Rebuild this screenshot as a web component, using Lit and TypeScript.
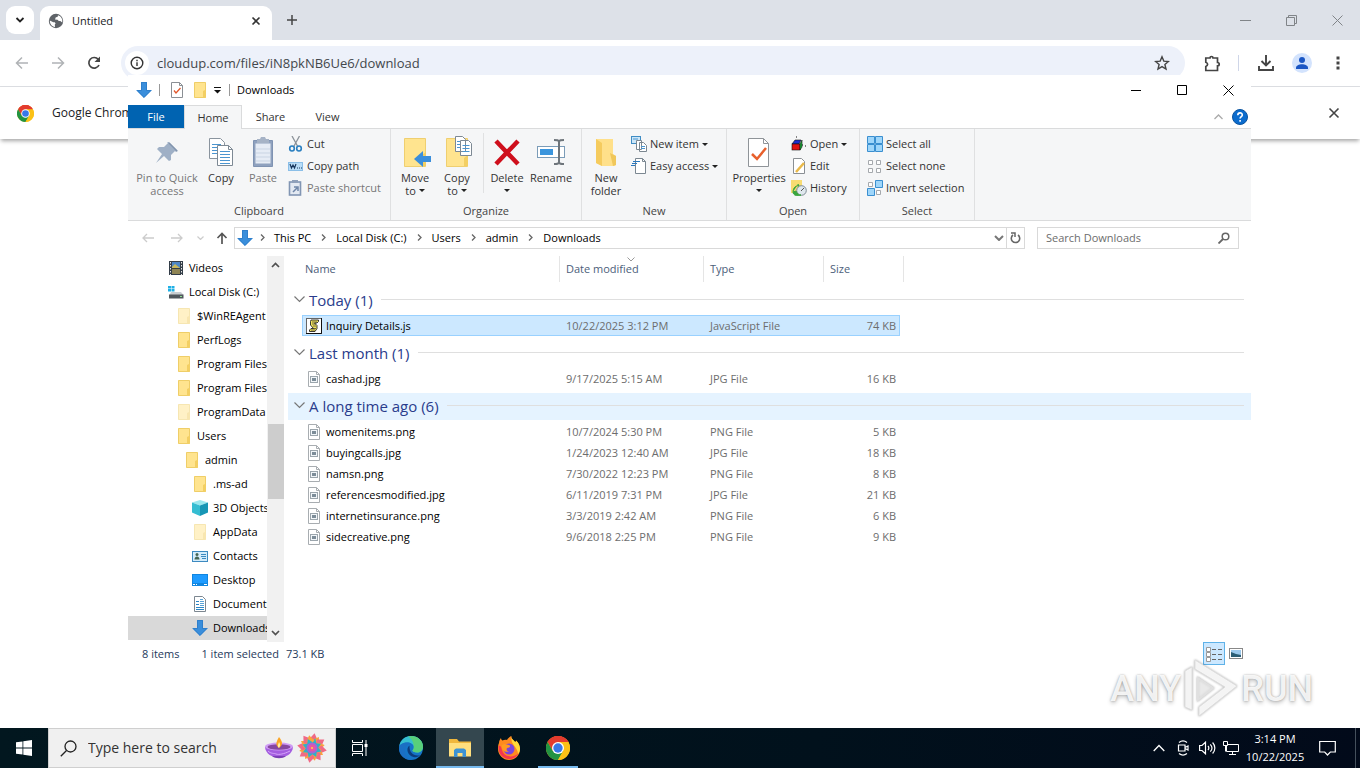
import { LitElement, html, css, nothing, TemplateResult } from "lit";
import { classMap } from "lit/directives/class-map.js";

const base = css`
  * { box-sizing: border-box; }
  button, input { font: inherit; color: inherit; border: 0; background: none; padding: 0; margin: 0; outline: 0; }
  button { display: inline-flex; align-items: center; justify-content: center; white-space: nowrap; }
  svg { display: block; flex: none; }
  ul, ol { list-style: none; margin: 0; padding: 0; }
`;

/* ---------- icons ---------- */

const downArrow = html`<svg width="16" height="16" viewBox="0 0 16 16"><path d="M5 0h6v8h5l-8 8-8-8h5z" fill="#3a8edb"/><path d="M5.500 .5h5v8h4.300L8 15.300 1.200 8.500h4.300z" fill="none" stroke="#2f7fcb"/></svg>`;
const folder = (pale = false) => html`<svg width="16" height="16" viewBox="0 0 16 16" opacity=${pale ? "0.5" : "1"}><path d="M2 .5h12V15.500H2z" fill="#ffe48f"/><path d="M2.500 .5h11V15.500h-11z" fill="none" stroke="#efce68"/><path d="M11 15.500V9l3-1.500v8z" fill="#f3cf63"/></svg>`;
const chromeLogo = (s: number) => html`<svg width=${s} height=${s} viewBox="0 0 24 24"><circle cx="12" cy="12" r="12" fill="#fbc116"/><path d="M12 12L1.600 6A12 12 0 0 1 22.400 6z" fill="#e33b2e"/><path d="M12 6h10.400A12 12 0 0 0 1.600 6l5.200 9z" fill="#e33b2e"/><path d="M6.800 15L1.600 6A12 12 0 0 0 12 24l5.200-9z" fill="#229342"/><path d="M17.200 15L12 24A12 12 0 0 0 22.400 6H12z" fill="#fbc116"/><circle cx="12" cy="12" r="6" fill="#fff"/><circle cx="12" cy="12" r="4.700" fill="#3878e8"/></svg>`;
const caret = html`<svg width="6" height="3" viewBox="0 0 6 3"><path d="M0 0h6L3 3z" fill="#222"/></svg>`;
const crumbChevron = html`<svg width="5" height="7" viewBox="0 0 5 7"><path d="M1 .5l3 3-3 3" fill="none" stroke="#666" stroke-width="1.300"/></svg>`;
const photoFile = html`<svg width="12" height="16" viewBox="0 0 12 16"><path d="M.5 .5h8l3 3v12H.5z" fill="#fff" stroke="#a8adb1"/><path d="M8.500 .5v3h3" fill="none" stroke="#a8adb1"/><rect x="2.500" y="5.500" width="7" height="6" fill="#f1f5f8" stroke="#9ba5ac"/><rect x="4" y="7" width="4" height="3" fill="#7c8c98"/></svg>`;
const scriptFile = html`<svg width="16" height="16" viewBox="0 0 16 16"><rect x=".5" y=".5" width="15" height="15" fill="#fff" stroke="#666"/><path d="M15.500 0v15.500H0" fill="none" stroke="#111"/><path d="M5 2h7.500v1.500L11 5H8.500l2.500 2.500v3L9 13.500H3.500V12L5 10.500h2.500L4.500 7V3.500z" fill="#f4e55a" stroke="#222" stroke-width=".9"/><path d="M6 4h5M6 6h4M7 8h3M6 10.500h4M5 12h4" stroke="#333" stroke-width=".7"/></svg>`;
const pageIcon = html`<svg width="12" height="16" viewBox="0 0 12 16"><path d="M.5 .5h8l3 3v12H.5z" fill="#fff" stroke="#8a8f94"/><path d="M8.500 .5v3h3" fill="none" stroke="#8a8f94"/><path d="M3 8.500l2 2.500 4.500-5" fill="none" stroke="#e2572b" stroke-width="1.300"/></svg>`;

const nav: Record<string, TemplateResult> = {
  videos: html`<svg width="16" height="16" viewBox="0 0 16 16"><rect x="1" y="1" width="14" height="14" fill="#333d48"/><rect x="4" y="2" width="8" height="6" fill="#4d86c5"/><rect x="4" y="9" width="8" height="5" fill="#8e8454"/><path d="M4 7l3-3 5 4H4z" fill="#c9b85a"/><path d="M2.500 2v13M13.500 2v13" stroke="#e8e8e8" stroke-dasharray="1.500 1.500"/></svg>`,
  disk: html`<svg width="16" height="16" viewBox="0 0 16 16"><path d="M0 2h3v2.500H0zM3.500 2h3v2.500h-3zM0 5h3v2.500H0zM3.500 5h3v2.500h-3z" fill="#1fb0e6"/><path d="M3 8h10l2.500 3h-14z" fill="#c9ced2"/><rect x="1" y="10.500" width="14.500" height="4" fill="#50575d"/><rect x="12" y="12" width="2" height="1" fill="#8fe08f"/></svg>`,
  objects: html`<svg width="16" height="16" viewBox="0 0 16 16"><path d="M8 0l8 2.500-8 3-8-3z" fill="#9be8ee"/><path d="M0 2.500l8 3V16l-8-3.500z" fill="#35bdd2"/><path d="M16 2.500l-8 3V16l8-3.500z" fill="#1796b5"/></svg>`,
  contacts: html`<svg width="16" height="16" viewBox="0 0 16 16"><rect x=".5" y="3.500" width="15" height="10" fill="#d4ecfb" stroke="#3c8ac0"/><circle cx="5" cy="6.500" r="1.500" fill="#465"/><path d="M2.500 11.500c0-4 5-4 5 0z" fill="#465"/><path d="M9 6.500h5M9 8.500h5M10 10.500h4" stroke="#3c8ac0"/></svg>`,
  desktop: html`<svg width="16" height="16" viewBox="0 0 16 16"><rect x="0" y="2" width="16" height="12" fill="#1186e0"/><path d="M1 3h14v8H1z" fill="#1e9bff"/><path d="M1 12.500h2m1 0h1m7 0h3" stroke="#fff"/></svg>`,
  document: html`<svg width="16" height="16" viewBox="0 0 16 16"><path d="M2.500 .5h8l3 3v12h-11z" fill="#fff" stroke="#7d8790"/><path d="M4 5.500h3M4 8.500h3M4 11.500h8M4 13.500h8" stroke="#2b86c6"/><path d="M8 3.500h3M8 5.500h4M8 7.500h4M8 9.500h4" stroke="#5aa3d6"/></svg>`,
  folder: folder(),
  pale: folder(true),
  down: downArrow,
};

const rib: Record<string, TemplateResult> = {
  pin: html`<svg width="32" height="32" viewBox="0 0 32 32"><path d="M18 6l9 9-2 1-1-1-4 4v5l-2 1-5-5-8 7 6-9-5-5 2-2h5l4-4-1-1z" fill="#9fb0c6"/><path d="M18 7l8 8" stroke="#8294ad" stroke-width="1.500"/></svg>`,
  copy: html`<svg width="32" height="32" viewBox="0 0 32 32"><path d="M4.500 2.500h11l4 4v16h-15z" fill="#fff" stroke="#8a949e"/><path d="M7 8.500h9M7 11.500h9M7 14.500h9M7 17.500h9" stroke="#4b95d0"/><path d="M12.500 9.500h11l4 4v16h-15z" fill="#fff" stroke="#7d8994"/><path d="M23.500 9.500v4h4" fill="none" stroke="#7d8994"/><path d="M15 15.500h10M15 18.500h10M15 21.500h10M15 24.500h10M15 27.500h10" stroke="#4b95d0"/></svg>`,
  paste: html`<svg width="32" height="32" viewBox="0 0 32 32"><path d="M6.500 4.500h19v26h-19z" fill="#8fa1be" stroke="#7f93b2"/><path d="M8.500 7.500h15v20h-15z" fill="#e6ecf5"/><path d="M9 13h14M9 17h14M9 21h14M9 25h14" stroke="#c9d4e3"/><path d="M10 3h3l1-2h4l1 2h3v4H10z" fill="#a6b3c6"/></svg>`,
  cut: html`<svg width="16" height="16" viewBox="0 0 16 16"><path d="M4 0l6 11M11.500 0l-6 11" stroke="#8b9299" stroke-width="1.300"/><ellipse cx="4" cy="12.500" rx="2.300" ry="2.500" fill="none" stroke="#2a7fc0" stroke-width="1.600"/><ellipse cx="11" cy="12.500" rx="2.300" ry="2.500" fill="none" stroke="#2a7fc0" stroke-width="1.600"/></svg>`,
  path: html`<svg width="16" height="16" viewBox="0 0 16 16"><rect x=".5" y="4.500" width="14" height="8" fill="#b8dcf7" stroke="#8bbfe8"/><path d="M2 6l1.500 4L5 7l1.500 3L8 6M9 10h1m1 0h1m1 0h1" fill="none" stroke="#17365d" stroke-width="1.200"/></svg>`,
  pasteShort: html`<svg width="16" height="16" viewBox="0 0 16 16"><rect x="1.500" y="2" width="11" height="13" fill="#e3e9f2" stroke="#8195b3" stroke-width="1.600"/><path d="M4 0h6v3H4z" fill="#8fa0ba"/><path d="M5 12l4-4M6 7h4v4" fill="none" stroke="#6e85a8" stroke-width="1.500"/></svg>`,
  move: html`<svg width="32" height="32" viewBox="0 0 32 32"><path d="M5.500 2.500h21v28h-21z" fill="#ffe48f" stroke="#efcf70"/><path d="M23 30V19l4-3v14z" fill="#f3cf63"/><path d="M32 20v6h-8v5l-9-8 9-8v5z" fill="#3a8edb"/></svg>`,
  copyTo: html`<svg width="32" height="32" viewBox="0 0 32 32"><path d="M5.500 2.500h21v28h-21z" fill="#ffe48f" stroke="#efcf70"/><path d="M23 30V22l4-3v11z" fill="#f3cf63"/><path d="M14.500 .5h7l3 3v12h-10zM19.500 4.500h8l3 3v12h-11z" fill="#fff" stroke="#7d8994"/><path d="M16 5.500h3M16 8.500h3M16 11.500h3M21.500 9.500h7M21.500 12.500h7M21.500 15.500h7" stroke="#4b95d0"/></svg>`,
  del: html`<svg width="32" height="32" viewBox="0 0 32 32"><path d="M5 5l22 23M27 5L5 28" stroke="#cf0f1c" stroke-width="4.500"/></svg>`,
  rename: html`<svg width="32" height="32" viewBox="0 0 32 32"><rect x="2.500" y="10.500" width="27" height="11" fill="#fff" stroke="#7b9cb8"/><rect x="5" y="13" width="13" height="6" fill="#3a95dd"/><path d="M19 4c3 0 5 0 5 2 0-2 2-2 5-2M24 6v20M19 28c3 0 5 0 5-2 0 2 2 2 5 2" fill="none" stroke="#6e757b" stroke-width="2"/></svg>`,
  newFolder: html`<svg width="32" height="32" viewBox="0 0 32 32"><path d="M6 3h17v15l3 2v9l-2 1H12l-6-3z" fill="#ffe08a"/><path d="M6 3l6 4v23l-6-3z" fill="#f5cb5e"/><path d="M20 17l6 3v9l-3 1z" fill="#f0c75b"/></svg>`,
  newItem: html`<svg width="16" height="16" viewBox="0 0 16 16"><rect x=".5" y=".5" width="9" height="7" fill="#cbe6f8" stroke="#3f8cc4"/><path d="M5.500 4.500h5v9h-5zM8.500 6.500h4l3 3v6h-7z" fill="#fff" stroke="#7b8791"/><path d="M10 10.500h4M10 12.500h4M2 3h5" stroke="#4b95d0"/></svg>`,
  easy: html`<svg width="16" height="16" viewBox="0 0 16 16"><path d="M4.500 .5h7l3 3v12h-10z" fill="#fff" stroke="#7b8791"/><path d="M11.500 .5v3h3" fill="none" stroke="#7b8791"/><path d="M2 3.500h7M1 5.500h5M0 7.500h4" stroke="#2a78bd"/></svg>`,
  props: html`<svg width="32" height="32" viewBox="0 0 32 32"><path d="M5.500 2.500h15l5 5v23h-20z" fill="#fff" stroke="#8f9499"/><path d="M20.500 2.500v5h5" fill="none" stroke="#8f9499"/><path d="M9 18l5 5 9-11" fill="none" stroke="#e8602c" stroke-width="2.500"/></svg>`,
  open: html`<svg width="16" height="16" viewBox="0 0 16 16"><path d="M1 8l3-4h6l-2 4z" fill="#1b2ed0" stroke="#111" stroke-width=".6"/><rect x="1" y="8" width="8" height="6" fill="#e01212" stroke="#111" stroke-width=".6"/><path d="M9 8l2-4v7l-2 3z" fill="#19b53a" stroke="#111" stroke-width=".6"/><path d="M5 1h1M11 9h1M14 10h1" stroke="#111"/></svg>`,
  edit: html`<svg width="16" height="16" viewBox="0 0 16 16"><path d="M2.500 .5h8l3 3v12h-11z" fill="#fff" stroke="#8a8f94"/><path d="M13 5l-8 9" stroke="#e9b949" stroke-width="2.500"/></svg>`,
  history: html`<svg width="16" height="16" viewBox="0 0 16 16"><rect x="0" y="0" width="11" height="13" fill="#f8dc72"/><circle cx="10.500" cy="10.500" r="4.800" fill="#dfe8ee" stroke="#7d8a94"/><path d="M10 11l3-3" stroke="#555"/><path d="M2 12c0-4 3-7 6-6l-1-2M2 12l3-1c1 3 3 4 5 4-4 2-8 0-8-3z" fill="#3aa63f" stroke="#3aa63f"/></svg>`,
  selAll: html`<svg width="16" height="16" viewBox="0 0 16 16"><path d="M.5 .5h7v7h-7zM8.500 .5h7v7h-7zM.5 8.500h7v7h-7zM8.500 8.500h7v7h-7z" fill="#9fd6fa" stroke="#3a8fd0"/></svg>`,
  selNone: html`<svg width="16" height="16" viewBox="0 0 16 16"><path d="M1.500 2.500h4v4h-4zM9.500 2.500h4v4h-4zM1.500 10.500h4v4h-4zM9.500 10.500h4v4h-4z" fill="#fff" stroke="#a5a9ad"/></svg>`,
  selInv: html`<svg width="16" height="16" viewBox="0 0 16 16"><path d="M1.500 2.500h4v4h-4zM9.500 10.500h4v4h-4z" fill="#fff" stroke="#a5a9ad"/><path d="M8.500 .5h7v7h-7zM.5 8.500h7v7h-7z" fill="#9fd6fa" stroke="#3a8fd0"/></svg>`,
};

/* ---------- browser ---------- */

class BrowserWindow extends LitElement {
  static styles = [base, css`
    :host { display: block; height: 100%; background: #fff; color: #202124; font: 11px/16px "Open Sans", "Noto Sans", sans-serif; }
    .tabs { display: flex; align-items: center; height: 40px; background: #dde1e8; padding-left: 6px; }
    .search { width: 28px; height: 28px; border-radius: 9px; background: #fff; }
    .tab { display: flex; align-items: center; gap: 8px; align-self: flex-end; height: 34px; width: 232px; margin-left: 6px; padding: 0 9px 4px 8px; border-radius: 9px 9px 0 0; background: #fff; }
    .tab span { flex: 1; }
    .new { width: 40px; height: 28px; }
    .sys { display: flex; margin-left: auto; }
    .sys button { width: 46px; height: 28px; }
    .bar { display: flex; align-items: center; height: 47px; border-bottom: 1px solid #dcdee2; padding: 0 4px; }
    .navs { display: flex; }
    .navs button { width: 36px; height: 34px; }
    .omni { display: flex; align-items: center; flex: 1; height: 34px; margin-left: 9px; border-radius: 17px; background: #edf1fa; padding: 0 15px 0 4px; gap: 8px; }
    .info { width: 24px; height: 24px; border-radius: 50%; background: #fff; }
    .omni input { flex: 1; font-size: 13px; color: #43474c; }
    .tools { display: flex; align-items: center; }
    .tools button { width: 36px; height: 34px; }
    .tools i { width: 1px; height: 16px; background: #cfd6e8; margin: 0 9px 0 8px; }
    .tools .ext { margin-left: 9px; }
    .note { display: flex; align-items: center; gap: 18px; height: 52px; padding: 0 17px; font-size: 12px; box-shadow: 0 3px 4px -1px rgba(0, 0, 0, .35); }
    .note button { margin-left: auto; width: 18px; height: 18px; }
  `];
  render() {
    return html`
      <header>
        <div class="tabs">
          <button class="search" aria-label="Search tabs"><svg width="10" height="6" viewBox="0 0 10 6"><path d="M1.500 1L5 4.500 8.500 1" fill="none" stroke="#222" stroke-width="1.800"/></svg></button>
          <div class="tab">
            <svg width="16" height="16" viewBox="0 0 16 16"><circle cx="8" cy="8" r="7.200" fill="#5f6368"/><path d="M1.800 7.500l3.500 1.700 1.500 0 .8 1.300-.8 1 .2 2.600C4 13.600 1.800 11 1.800 7.500zM10 2.200L9.500 4 7.800 4.300 7 6.500l2.500.3 1.300 1.200h1.500l1.900 1.500C15 6 13 3 10 2.200z" fill="#fff"/></svg>
            <span>Untitled</span>
            <button aria-label="Close tab"><svg width="14" height="14" viewBox="0 0 14 14"><path d="M3.500 3.500l7 7M10.500 3.500l-7 7" stroke="#333" stroke-width="1.600"/></svg></button>
          </div>
          <button class="new" aria-label="New tab"><svg width="12" height="12" viewBox="0 0 12 12"><path d="M6 1v10M1 6h10" stroke="#444" stroke-width="1.500"/></svg></button>
          <div class="sys">
            <button aria-label="Minimize"><svg width="11" height="11" viewBox="0 0 11 11"><path d="M0 5.500h11" stroke="#808488"/></svg></button>
            <button aria-label="Restore"><svg width="11" height="11" viewBox="0 0 11 11"><path d="M.5 2.500h8v8h-8zM2.500 2V.5h8v8H9" fill="none" stroke="#808488"/></svg></button>
            <button aria-label="Close"><svg width="11" height="11" viewBox="0 0 11 11"><path d="M.5 .5l10 10M10.500 .5l-10 10" stroke="#808488"/></svg></button>
          </div>
        </div>
        <div class="bar">
          <div class="navs">
            <button aria-label="Back"><svg width="14" height="14" viewBox="0 0 14 14"><path d="M13 7H2M7 1.500L1.500 7 7 12.500" fill="none" stroke="#b0b3b6" stroke-width="1.500"/></svg></button>
            <button aria-label="Forward"><svg width="14" height="14" viewBox="0 0 14 14"><path d="M1 7h11M7 1.500L12.500 7 7 12.500" fill="none" stroke="#b0b3b6" stroke-width="1.500"/></svg></button>
            <button aria-label="Reload"><svg width="14" height="14" viewBox="0 0 14 14"><path d="M12 9A5.300 5.300 0 1 1 11.300 3.500" fill="none" stroke="#444" stroke-width="1.700"/><path d="M13 .5V6H7.500z" fill="#444"/></svg></button>
          </div>
          <div class="omni">
            <button class="info" aria-label="View site information"><svg width="14" height="14" viewBox="0 0 14 14"><circle cx="7" cy="7" r="5.800" fill="none" stroke="#333" stroke-width="1.400"/><path d="M7 6.200V10M7 3.800v1.400" stroke="#333" stroke-width="1.400"/></svg></button>
            <input type="text" aria-label="Address and search bar" value="cloudup.com/files/iN8pkNB6Ue6/download">
            <button aria-label="Bookmark this tab"><svg width="16" height="16" viewBox="0 0 16 16"><path d="M8 1.800l1.800 4.300 4.600.4-3.500 3 1.100 4.500L8 11.600 4 14l1.100-4.500-3.500-3 4.600-.4z" fill="none" stroke="#444" stroke-width="1.400"/></svg></button>
          </div>
          <div class="tools">
            <button class="ext" aria-label="Extensions"><svg width="17" height="17" viewBox="0 0 17 17"><path d="M1.800 3h4.200c0-2 3-2 3 0h4.500v4.500c2.300 0 2.300 3.300 0 3.300v4.700H1.800V11.500c2.400-.8 2.400-3.500 0-4.300z" fill="none" stroke="#444" stroke-width="1.700"/></svg></button>
            <i></i>
            <button aria-label="Downloads"><svg width="18" height="18" viewBox="0 0 18 18"><path d="M9 1v10M4.500 7L9 11.500 13.500 7M2 12v4h14v-4" fill="none" stroke="#444" stroke-width="1.900"/></svg></button>
            <button aria-label="Profile"><svg width="20" height="20" viewBox="0 0 20 20"><circle cx="10" cy="10" r="10" fill="#d3e3fd"/><circle cx="10" cy="7" r="3" fill="#1a56c4"/><path d="M4 15c0-5 12-5 12 0v1H4z" fill="#1a56c4"/></svg></button>
            <button aria-label="Menu"><svg width="4" height="16" viewBox="0 0 4 16"><path d="M.5 1.500h3v3h-3zM.5 6.500h3v3h-3zM.5 11.500h3v3h-3z" fill="#444"/></svg></button>
          </div>
        </div>
        <div class="note">
          ${chromeLogo(17)}<span>Google Chrome</span>
          <button aria-label="Dismiss"><svg width="12" height="12" viewBox="0 0 12 12"><path d="M1.500 1.500l9 9M10.500 1.500l-9 9" stroke="#444" stroke-width="1.600"/></svg></button>
        </div>
      </header>`;
  }
}
customElements.define("browser-window", BrowserWindow);

/* ---------- file explorer ---------- */

type NavItem = [string, string, number];
const tree: NavItem[] = [
  ["videos", "Videos", 0], ["disk", "Local Disk (C:)", 0], ["pale", "$WinREAgent", 1], ["folder", "PerfLogs", 1],
  ["folder", "Program Files", 1], ["folder", "Program Files (x86)", 1], ["pale", "ProgramData", 1], ["folder", "Users", 1],
  ["folder", "admin", 2], ["folder", ".ms-ad", 3], ["objects", "3D Objects", 3], ["pale", "AppData", 3],
  ["contacts", "Contacts", 3], ["desktop", "Desktop", 3], ["document", "Documents", 3], ["down", "Downloads", 3],
];

const groups = [
  { label: "Today (1)", files: [["Inquiry Details.js", "10/22/2025 3:12 PM", "JavaScript File", "74 KB"]] },
  { label: "Last month (1)", files: [["cashad.jpg", "9/17/2025 5:15 AM", "JPG File", "16 KB"]] },
  { label: "A long time ago (6)", hot: true, files: [
    ["womenitems.png", "10/7/2024 5:30 PM", "PNG File", "5 KB"],
    ["buyingcalls.jpg", "1/24/2023 12:40 AM", "JPG File", "18 KB"],
    ["namsn.png", "7/30/2022 12:23 PM", "PNG File", "8 KB"],
    ["referencesmodified.jpg", "6/11/2019 7:31 PM", "JPG File", "21 KB"],
    ["internetinsurance.png", "3/3/2019 2:42 AM", "PNG File", "6 KB"],
    ["sidecreative.png", "9/6/2018 2:25 PM", "PNG File", "9 KB"],
  ] },
];

class FileExplorer extends LitElement {
  static styles = [base, css`
    :host { display: flex; flex-direction: column; background: #fff; color: #000; font: 11px/16px "Open Sans", "Noto Sans", sans-serif; }
    .title { display: flex; align-items: center; height: 30px; padding-left: 8px; }
    .quick { display: flex; align-items: center; }
    .quick i { width: 1px; height: 12px; background: #999; }
    .q1 { margin: 0 5px 0 7px; }
    .q2 { margin: 0 7px 0 6px; }
    .quick button { width: 23px; height: 22px; }
    .quick .drop { width: 12px; }
    .title span { flex: 1; }
    .title .win { width: 46px; height: 30px; }
    .tabs { display: flex; height: 24px; border-bottom: 1px solid #dadbdc; color: #333; }
    .tabs button { width: 57px; height: 24px; }
    .tabs .file { background: #0063b1; color: #fff; height: 23px; width: 56px; }
    .tabs .on { background: #f5f6f7; border: 1px solid #dadbdc; border-bottom: 0; width: 58px; }
    .tabs .help { width: 22px; }
    .tabs .up { width: 22px; margin-left: auto; }
    .ribbon { display: flex; height: 92px; background: #f5f6f7; border-bottom: 1px solid #dadbdc; color: #333; }
    .group { display: flex; flex-direction: column; padding-top: 4px; border-right: 1px solid #dfe0e1; }
    .acts { display: flex; height: 70px; padding-left: 3px; }
    .group h2 { margin: 0; font: inherit; text-align: center; color: #444; line-height: 16px; }
    .big { flex-direction: column; justify-content: flex-start; padding-top: 3px; gap: 3px; line-height: 13px; width: 42px; height: 68px; }
    .big .line { display: flex; align-items: center; justify-content: center; gap: 3px; min-height: 13px; }
    .w66 { width: 66px; } .w58 { width: 58px; } .w48 { width: 46px; }
    .off { color: #777; }
    .small { display: flex; flex-direction: column; align-items: flex-start; padding-left: 3px; }
    .small button { height: 22px; gap: 3px; }
    .sep { width: 1px; height: 60px; background: #e0e1e2; margin: 0 2px 0 5px; }
    .g1 { width: 263px; } .g2 { width: 191px; } .g3 { width: 145px; } .g4 { width: 133px; } .g5 { width: 115px; }
    .g1 .acts { padding-left: 6px; }
    .g1 .small, .g3 .small, .g5 .small { padding-left: 4px; }
    .addr { display: flex; align-items: center; height: 35px; padding: 0 12px 2px 5px; }
    .addr .arrow { width: 29px; height: 22px; }
    .addr .tiny { width: 18px; height: 22px; }
    .addr .upb { width: 25px; height: 22px; }
    .path { display: flex; align-items: center; flex: 1; height: 22px; border: 1px solid #d9d9d9; padding-left: 2px; }
    .path ol { display: flex; align-items: center; flex: 1; }
    .path li { display: flex; align-items: center; }
    .path li > svg { margin: 0 10px; }
    .path li:first-child > svg { margin: 0 9px 0 7px; }
    .path button { height: 20px; }
    .path .hist { width: 15px; }
    .path .ref { width: 18px; border-left: 1px solid #d9d9d9; }
    .find { display: flex; align-items: center; width: 202px; height: 22px; border: 1px solid #d9d9d9; margin-left: 12px; padding: 0 8px; }
    .find input { flex: 1; min-width: 0; }
    input::placeholder { color: #6d6d6d; opacity: 1; }
    .body { display: flex; flex: 1; }
    .tree { width: 139px; overflow: hidden; }
    .tree li { display: flex; align-items: center; gap: 5px; height: 24px; white-space: nowrap; padding-left: 40px; }
    .tree .d1 { padding-left: 48px; } .tree .d2 { padding-left: 56px; } .tree .d3 { padding-left: 64px; }
    .tree .cur { background: #d9d9d9; }
    .scroll { display: flex; flex-direction: column; align-items: center; width: 17px; background: #f1f1f1; }
    .scroll button { width: 17px; height: 18px; }
    .lane { flex: 1; width: 100%; padding-top: 150px; padding-left: 1px; }
    .thumb { height: 75px; background: #cdcdcd; }
    table, thead, tbody { display: block; }
    table { flex: 1; padding-left: 4px; color: #6d6d6d; }
    thead { padding-bottom: 5px; }
    .cols { display: grid; grid-template-columns: 257px 144px 120px 77px; width: 598px; margin-left: 14px; align-items: center; height: 21px; }
    .cols td { padding: 0; display: flex; align-items: center; gap: 4px; padding-left: 7px; height: 100%; }
    .cols td:first-child { color: #000; padding-left: 4px; }
    .cols td:last-child { justify-content: flex-end; padding-right: 4px; }
    .head { height: 26px; width: 602px; grid-template-columns: 258px 144px 120px 80px; }
    .head th { position: relative; font-weight: 400; text-align: left; color: #4c607a; padding: 0 0 0 6px; border-right: 1px solid #e5e5e5; line-height: 26px; }
    .head th:first-child { padding-left: 3px; }
    .head svg { position: absolute; top: 1px; left: 67px; }
    tbody { padding-bottom: 4px; }
    .grp { display: block; margin-bottom: 1px; }
    .grp th { display: flex; align-items: center; gap: 4px; height: 27px; padding: 0 7px 2px 6px; font-size: 15px; line-height: 20px; font-weight: 400; color: #2a3c8c; }
    .grp th::after { content: ""; flex: 1; height: 1px; background: #dfdfdf; margin-left: 4px; }
    .hot th { background: #e5f3ff; }
    .cell { width: 16px; display: flex; justify-content: center; }
    .sel { background: #cce8ff; outline: 1px solid #99d1ff; outline-offset: -1px; }
    .status { display: flex; align-items: center; height: 27px; padding: 0 8px 4px 14px; color: #1e395b; }
    .status .picked { margin: 0 7px 0 22px; }
    .views { display: flex; gap: 4px; margin-left: auto; }
    .views button { height: 23px; }
    .views .det { width: 22px; background: #cce8ff; border: 1px solid #5fb2e8; }
  `];

  big(icon: string, lines: string[], opt: { cls?: string; caret?: boolean; off?: boolean } = {}) {
    const last = lines.length - 1;
    return html`<button class="big ${opt.cls ?? ""} ${opt.off ? "off" : ""}" ?disabled=${opt.off}>
      ${rib[icon]}
      <span>${lines.map((l, i) => html`<span class="line">${l}${opt.caret && i === last ? caret : nothing}</span>`)}</span>
    </button>`;
  }
  small(icon: string, text: string, withCaret = false, off = false) {
    return html`<button class=${classMap({ off })} ?disabled=${off}>${rib[icon]}<span>${text}</span>${withCaret ? caret : nothing}</button>`;
  }

  render() {
    return html`
      <div class="title">
        <div class="quick">
          ${downArrow}<i class="q1"></i>
          <button aria-label="Properties">${pageIcon}</button>
          <button aria-label="New folder">${folder()}</button>
          <button class="drop" aria-label="Customize toolbar"><svg width="7" height="7" viewBox="0 0 7 7"><path d="M0 .5h7" stroke="#111"/><path d="M0 3h7L3.500 6.500z" fill="#111"/></svg></button>
          <i class="q2"></i>
        </div>
        <span>Downloads</span>
        <button class="win" aria-label="Minimize"><svg width="10" height="10" viewBox="0 0 10 10"><path d="M0 5.500h10" stroke="#000"/></svg></button>
        <button class="win" aria-label="Maximize"><svg width="10" height="10" viewBox="0 0 10 10"><path d="M.5 .5h9v9h-9z" fill="none" stroke="#000"/></svg></button>
        <button class="win" aria-label="Close"><svg width="11" height="11" viewBox="0 0 11 11"><path d="M.5 .5l10 10M10.500 .5l-10 10" stroke="#000"/></svg></button>
      </div>
      <nav class="tabs">
        <button class="file">File</button><button class="on">Home</button><button>Share</button><button>View</button>
        <button class="up" aria-label="Collapse ribbon"><svg width="9" height="6" viewBox="0 0 9 6"><path d="M.5 5l4-4 4 4" fill="none" stroke="#aaa" stroke-width="1.300"/></svg></button>
        <button class="help" aria-label="Help"><svg width="16" height="16" viewBox="0 0 16 16"><circle cx="8" cy="8" r="7.500" fill="#0b6cce" stroke="#0a539e"/><path d="M5.800 6.200c0-3 4.500-3 4.500-.3 0 1.700-2.200 1.700-2.200 3.600M8.100 11v1.700" fill="none" stroke="#fff" stroke-width="1.600"/></svg></button>
      </nav>
      <div class="ribbon">
        <section class="group g1">
          <div class="acts">
            ${this.big("pin", ["Pin to Quick", "access"], { cls: "w66", off: true })}
            ${this.big("copy", ["Copy"])}
            ${this.big("paste", ["Paste"], { off: true })}
            <div class="small">${this.small("cut", "Cut")}${this.small("path", "Copy path")}${this.small("pasteShort", "Paste shortcut", false, true)}</div>
          </div>
          <h2>Clipboard</h2>
        </section>
        <section class="group g2">
          <div class="acts">
            ${this.big("move", ["Move", "to"], { caret: true })}
            ${this.big("copyTo", ["Copy", "to"], { caret: true })}
            <div class="sep"></div>
            ${this.big("del", ["Delete", ""], { caret: true })}
            ${this.big("rename", ["Rename"], { cls: "w48" })}
          </div>
          <h2>Organize</h2>
        </section>
        <section class="group g3">
          <div class="acts">
            ${this.big("newFolder", ["New", "folder"])}
            <div class="small">${this.small("newItem", "New item", true)}${this.small("easy", "Easy access", true)}</div>
          </div>
          <h2>New</h2>
        </section>
        <section class="group g4">
          <div class="acts">
            ${this.big("props", ["Properties", ""], { cls: "w58", caret: true })}
            <div class="small">${this.small("open", "Open", true)}${this.small("edit", "Edit")}${this.small("history", "History")}</div>
          </div>
          <h2>Open</h2>
        </section>
        <section class="group g5">
          <div class="acts">
            <div class="small">${this.small("selAll", "Select all")}${this.small("selNone", "Select none")}${this.small("selInv", "Invert selection")}</div>
          </div>
          <h2>Select</h2>
        </section>
      </div>
      <div class="addr">
        <button class="arrow" aria-label="Back"><svg width="12" height="10" viewBox="0 0 12 10"><path d="M12 5H1M5 1L1 5l4 4" fill="none" stroke="#ccc" stroke-width="1.300"/></svg></button>
        <button class="arrow" aria-label="Forward"><svg width="12" height="10" viewBox="0 0 12 10"><path d="M0 5h11M7 1l4 4-4 4" fill="none" stroke="#ccc" stroke-width="1.300"/></svg></button>
        <button class="tiny" aria-label="Recent locations"><svg width="7" height="4" viewBox="0 0 7 4"><path d="M.5 .5l3 3 3-3" fill="none" stroke="#ccc" stroke-width="1.200"/></svg></button>
        <button class="upb" aria-label="Up"><svg width="12" height="12" viewBox="0 0 12 12"><path d="M6 12V1.500M1.500 6L6 1.500 10.500 6" fill="none" stroke="#555" stroke-width="1.700"/></svg></button>
        <div class="path">
          ${downArrow}
          <ol>${["This PC", "Local Disk (C:)", "Users", "admin", "Downloads"].map((c) => html`<li>${crumbChevron}<button>${c}</button></li>`)}</ol>
          <button class="hist" aria-label="Previous locations"><svg width="10" height="6" viewBox="0 0 10 6"><path d="M1 1l4 4 4-4" fill="none" stroke="#777" stroke-width="2"/></svg></button>
          <button class="ref" aria-label="Refresh"><svg width="11" height="12" viewBox="0 0 11 12"><path d="M8 3a4.200 4.200 0 1 1-5 0" fill="none" stroke="#666" stroke-width="1.600"/><path d="M1 1h4v4" fill="none" stroke="#666" stroke-width="1.500"/></svg></button>
        </div>
        <label class="find">
          <input type="text" aria-label="Search Downloads" placeholder="Search Downloads">
          <svg width="12" height="12" viewBox="0 0 12 12"><circle cx="7.500" cy="4.500" r="3.300" fill="none" stroke="#666" stroke-width="1.500"/><path d="M5 7l-4.500 4.500" stroke="#666" stroke-width="1.800"/></svg>
        </label>
      </div>
      <div class="body">
        <ul class="tree">
          ${tree.map(([icon, text, depth]) => html`<li class=${classMap({ ["d" + depth]: true, cur: icon === "down" })}>${nav[icon]}<span>${text}</span></li>`)}
        </ul>
        <div class="scroll">
          <button aria-label="Scroll up"><svg width="9" height="6" viewBox="0 0 9 6"><path d="M1 5l3.500-3.500L8 5" fill="none" stroke="#505050" stroke-width="1.700"/></svg></button>
          <div class="lane"><div class="thumb"></div></div>
          <button aria-label="Scroll down"><svg width="9" height="6" viewBox="0 0 9 6"><path d="M1 1l3.500 3.500L8 1" fill="none" stroke="#505050" stroke-width="1.700"/></svg></button>
        </div>
        <table>
          <thead>
            <tr class="cols head"><th>Name</th><th>Date modified<svg width="8" height="5" viewBox="0 0 8 5"><path d="M.5 .5L4 4 7.500 .5" fill="none" stroke="#999"/></svg></th><th>Type</th><th>Size</th></tr>
          </thead>
          ${groups.map((g, gi) => html`<tbody>
            <tr class=${classMap({ grp: true, hot: !!g.hot })}><th colspan="4"><svg width="11" height="7" viewBox="0 0 11 7"><path d="M.5 .5l5 5 5-5" fill="none" stroke="#777" stroke-width="1.200"/></svg><span>${g.label}</span></th></tr>
            ${g.files.map((f) => html`<tr class=${classMap({ cols: true, sel: gi === 0 })}>
              <td><span class="cell">${gi === 0 ? scriptFile : photoFile}</span>${f[0]}</td><td>${f[1]}</td><td>${f[2]}</td><td>${f[3]}</td>
            </tr>`)}
          </tbody>`)}
        </table>
      </div>
      <footer class="status">
        <span>8 items</span><span class="picked">1 item selected</span><span>73.1 KB</span>
        <div class="views">
          <button class="det" aria-label="Details view"><svg width="16" height="16" viewBox="0 0 16 16"><path d="M.5 1.500h4v4h-4zM.5 6.500h4v4h-4zM.5 11.500h4v4h-4z" fill="#fff" stroke="#999"/><path d="M6 3.500h10M6 8.500h10M6 13.500h10" stroke="#666" stroke-dasharray="4 2"/></svg></button>
          <button aria-label="Large icons view"><svg width="14" height="11" viewBox="0 0 14 11"><rect x=".5" y=".5" width="13" height="10" fill="#fff" stroke="#888"/><rect x="2" y="2" width="10" height="7" fill="#9cc9ec"/><path d="M2 4l5 2 5 1v2H2z" fill="#2b5d74"/></svg></button>
        </div>
      </footer>`;
  }
}
customElements.define("file-explorer", FileExplorer);

/* ---------- taskbar ---------- */

class TaskBar extends LitElement {
  static styles = [base, css`
    :host { display: flex; height: 40px; background: linear-gradient(90deg, #02171f, #01111c 60%, #020a1a); color: #fff; font: 11px/18px "Open Sans", "Noto Sans", sans-serif; }
    button { height: 40px; width: 48px; }
    .find { display: flex; align-items: center; width: 288px; background: #f0f0f0; border: 1px solid #cfcfcf; padding: 0 8px 0 11px; gap: 11px; }
    .find input { flex: 1; min-width: 0; font-size: 14px; }
    .find input::placeholder { color: #333; opacity: 1; }
    .art { display: flex; align-items: center; gap: 4px; }
    .task { width: 51px; padding-right: 4px; }
    .apps { display: flex; gap: 1px; }
    .on { background: #34474f; }
    .run { position: relative; }
    .run::after { content: ""; position: absolute; left: 4px; right: 4px; bottom: 0; height: 2px; background: #76b9ed; }
    .on::after { left: 0; right: 0; }
    .tray { display: flex; align-items: center; margin-left: auto; }
    .tray button { width: 24px; }
    .tray .clock { display: block; width: 64px; text-align: center; line-height: 18px; }
    .tray .bell { width: 40px; }
    .edge { width: 5px; height: 40px; border-left: 1px solid #45505c; margin-left: 8px; }
  `];
  render() {
    return html`
      <button aria-label="Start"><svg width="16" height="16" viewBox="0 0 16 16"><path d="M0 2.300L6.500 1.400v6.200H0zM7.300 1.300L16 0v7.600H7.300zM0 8.400h6.500v6.200L0 13.700zM7.300 8.400H16V16l-8.700-1.300z" fill="#fff"/></svg></button>
      <label class="find">
        <svg width="17" height="17" viewBox="0 0 17 17"><circle cx="10.500" cy="6.500" r="5.500" fill="none" stroke="#222" stroke-width="1.300"/><path d="M6.500 10.500L.8 16.200" stroke="#222" stroke-width="1.300"/></svg>
        <input type="text" aria-label="Search" placeholder="Type here to search">
        <span class="art">
          <svg width="28" height="24" viewBox="0 0 28 24"><path d="M0 11c1 14 27 14 28 0z" fill="#a45ee0"/><path d="M7 20c3 3 11 3 14 0z" fill="#7a3fb5"/><ellipse cx="14" cy="10.500" rx="14" ry="4" fill="#cf9cf5"/><ellipse cx="14" cy="11" rx="11.500" ry="2.700" fill="#85479f"/><path d="M14 1c4 5 4 8 0 11-4-3-3-6 0-11z" fill="#fba524"/><path d="M14 6c2 3 1 4 0 6-2-2-1-3 0-6z" fill="#fff0a0"/><path d="M3 15c3 3 6 2 8 3 3 1 8 0 14-3" fill="none" stroke="#d6a5fa"/></svg>
          <svg width="30" height="30" viewBox="-15 -15 30 30">
            ${[0, 45, 90, 135, 180, 225, 270, 315].map((a) => html`<svg x="-15" y="-15" width="30" height="30" viewBox="-15 -15 30 30"><g transform="rotate(${a + 10})"><path d="M0-15l4 6-4 5-4-5z" fill="#f06a86"/></g><g transform="rotate(${a + 32})"><path d="M0-13l4 6-4 4-4-4z" fill="#f9a53a"/></g><g transform="rotate(${a + 20})"><path d="M0-10l3 5-3 3-3-3z" fill="#2fb0c9"/></g></svg>`)}
            <circle r="5.500" fill="#a863d6"/><circle r="3.500" fill="#e9559f"/><circle r="1" fill="#ffd24a"/>
          </svg>
        </span>
      </label>
      <button class="task" aria-label="Task view"><svg width="16" height="16" viewBox="0 0 16 16"><path d="M.5 0v2.500h10V0M.5 4.500h10v7H.5zM.5 16v-2.500h10V16M14 0v16" fill="none" stroke="#fff"/><rect x="12.500" y="4" width="3" height="3" fill="#fff"/></svg></button>
      <nav class="apps">
        <button aria-label="Microsoft Edge"><svg width="24" height="24" viewBox="0 0 24 24"><circle cx="12" cy="12" r="12" fill="#1575c8"/><path d="M.3 10C1.500 4 6 0 12 0c7 0 12 5 12 10.500 0 4-3 6-6 6-3 0-4.500-1.200-4.500-2 0-.6 1.300-1 1.300-3C14.800 8.500 11.500 6.500 8 6.500 4.500 6.500 1.500 8 .3 10z" fill="#36bfd0"/><path d="M12 0c7 0 12 5 12 10.500 0 4-3 6-6 6-3 0-4.500-1.200-4.500-2 0-.6 1.300-1 1.300-3C14.800 6 13 3 9 .5z" fill="#58cf7a"/><path d="M10.500 9.500c-4 3-2 10 4 11.500 3 .7 5.500-.5 7-2-6 2-11.500-2-11-9.500z" fill="#0d3c7c"/><path d="M8.500 9c-5 4-3 13 4.500 15C6 24.500 0 19 0 12.500 0 9 4 6.500 8 6.500c3.500 0 6.500 2 6.800 4.800C13.500 8.500 10.500 8 8.500 9z" fill="#1b6fc4"/></svg></button>
        <button class="run on" aria-label="File Explorer"><svg width="22" height="18" viewBox="0 0 22 18"><path d="M0 0h8l2 2.500h12V17H0z" fill="#f0b73c"/><path d="M0 4h22v13.500H0z" fill="#ffdf7e"/><path d="M5 18v-7l2-1.500h8l2 1.500v7h-3.500v-4h-5v4z" fill="#3b92d4"/></svg></button>
        <button aria-label="Firefox"><svg width="24" height="24" viewBox="0 0 24 24"><path d="M2 7c0-2 1-4 2-5 0 1 .5 2 1.500 2.500C7 3.500 9 3.500 10 4c1-2 3-3.500 4.500-4C14 3 17 4 18 6c1 0 1-1 1-1.500 3 2.500 4 6 4 8.500 0 6.500-5 11-11 11S1 19 1 13c0-2 0-4 1-6z" fill="#ff8a1e"/><path d="M14.500 0C14 3 17 4 18 6c1 0 1-1 1-1.500 3 2.500 4 6 4 8.500 0 2-1 4-2 5 0-7-8-9-6.500-18z" fill="#ffd93a"/><path d="M1.500 10C1 18 6 23 12 23c4 0 8-2 9.500-6-3 4-12 5-15 0C4 14 5 9 1.500 10z" fill="#f5364e"/><circle cx="12" cy="13" r="5.500" fill="#7a45dc"/><path d="M5 9c3-2 5 0 7 0 2 1 1 3-2 3-1 2 0 3 2 3.500-5 1.500-8-3-7-6.500z" fill="#ff9a20"/></svg></button>
        <button class="run" aria-label="Google Chrome">${chromeLogo(24)}</button>
      </nav>
      <div class="tray">
        <button aria-label="Show hidden icons"><svg width="12" height="8" viewBox="0 0 12 8"><path d="M.7 7L6 1.500 11.300 7" fill="none" stroke="#fff" stroke-width="1.300"/></svg></button>
        <button aria-label="Meet Now"><svg width="14" height="16" viewBox="0 0 14 16"><path d="M3 2.500C5.500 .5 8.500 .5 11 2.500M3 13.500c2.500 2 5.500 2 8 0M2.500 5h6.500v6H2.500zM9 7.500L12 6v4L9 8.500" fill="none" stroke="#fff" stroke-width="1.200"/></svg></button>
        <button aria-label="Volume"><svg width="17" height="14" viewBox="0 0 17 14"><path d="M.6 4.500H3L6.500 1.200v11.600L3 9.500H.6zM9 5c1 1.200 1 2.800 0 4M11.300 3.300c2 2.200 2 5.200 0 7.400M13.600 1.500c3 3.200 3 7.800 0 11" fill="none" stroke="#fff" stroke-width="1.200"/></svg></button>
        <button aria-label="Network"><svg width="16" height="14" viewBox="0 0 16 14"><path d="M5 3.500h10.500v7H3.500V5M9.500 10.500v3M6 13.500h7M.5 .5h4v4h-4zM2.500 4.500v6" fill="none" stroke="#fff"/></svg></button>
        <button class="clock">3:14 PM<br>10/22/2025</button>
        <button class="bell" aria-label="Notifications"><svg width="17" height="16" viewBox="0 0 17 16"><path d="M.7 1.500h15.600v10.500h-5L8.500 15l-2.800-3h-5z" fill="none" stroke="#fff" stroke-width="1.200"/></svg></button>
        <div class="edge"></div>
      </div>`;
  }
}
customElements.define("task-bar", TaskBar);

/* ---------- desktop ---------- */

class AppRoot extends LitElement {
  static styles = [base, css`
    :host { display: flex; flex-direction: column; height: 100vh; overflow: hidden; }
    main { position: relative; flex: 1; min-height: 0; }
    file-explorer { position: absolute; left: 128px; right: 109px; top: 75px; height: 594px; }
    .mark { position: absolute; right: 47px; bottom: 8px; display: flex; align-items: center; gap: 2px; font: 500 36px/60px "Roboto", sans-serif; color: rgba(255, 255, 255, .9); text-shadow: 0 0 2px rgba(0, 0, 0, .3), 0 2px 4px rgba(0, 0, 0, .25); }
    .mark svg { filter: drop-shadow(0 0 1px rgba(0, 0, 0, .35)); }
  `];
  render() {
    return html`
      <main>
        <browser-window></browser-window>
        <file-explorer></file-explorer>
        <div class="mark"><span>ANY</span><svg width="56" height="62" viewBox="0 0 56 62"><path d="M2 13v36l7 3V9zM12 2l42 26-38 30v-9l26-20-30-18z" fill="#fff" fill-opacity=".85" stroke="#ddd"/><path d="M15 20v22l15-12z" fill="#fff" fill-opacity=".5" stroke="#e0e0e0" stroke-width="2"/></svg><span>RUN</span></div>
      </main>
      <task-bar></task-bar>`;
  }
}
customElements.define("app-root", AppRoot);
